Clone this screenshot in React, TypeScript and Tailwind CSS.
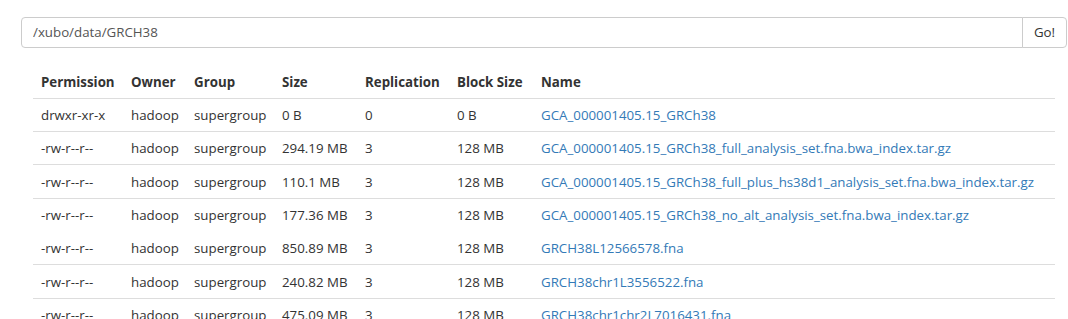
import React from "react"

interface FileRow {
  permission: string
  owner: string
  group: string
  size: string
  replication: string
  blockSize: string
  name: string
  noBorder?: boolean
}

const rows: FileRow[] = [
  { permission: "drwxr-xr-x", owner: "hadoop", group: "supergroup", size: "0 B", replication: "0", blockSize: "0 B", name: "GCA_000001405.15_GRCh38" },
  { permission: "-rw-r--r--", owner: "hadoop", group: "supergroup", size: "294.19 MB", replication: "3", blockSize: "128 MB", name: "GCA_000001405.15_GRCh38_full_analysis_set.fna.bwa_index.tar.gz" },
  { permission: "-rw-r--r--", owner: "hadoop", group: "supergroup", size: "110.1 MB", replication: "3", blockSize: "128 MB", name: "GCA_000001405.15_GRCh38_full_plus_hs38d1_analysis_set.fna.bwa_index.tar.gz" },
  { permission: "-rw-r--r--", owner: "hadoop", group: "supergroup", size: "177.36 MB", replication: "3", blockSize: "128 MB", name: "GCA_000001405.15_GRCh38_no_alt_analysis_set.fna.bwa_index.tar.gz" },
  { permission: "-rw-r--r--", owner: "hadoop", group: "supergroup", size: "850.89 MB", replication: "3", blockSize: "128 MB", name: "GRCH38L12566578.fna", noBorder: true },
  { permission: "-rw-r--r--", owner: "hadoop", group: "supergroup", size: "240.82 MB", replication: "3", blockSize: "128 MB", name: "GRCH38chr1L3556522.fna" },
  { permission: "-rw-r--r--", owner: "hadoop", group: "supergroup", size: "475.09 MB", replication: "3", blockSize: "128 MB", name: "GRCH38chr1chr2L7016431.fna" },
]

const headers = ["Permission", "Owner", "Group", "Size", "Replication", "Block Size", "Name"]
const widths = ["w-[90px]", "w-[63px]", "w-[88px]", "w-[83px]", "w-[92px]", "w-[84px]", ""]

export default function App() {
  return (
    <div className="min-h-screen bg-white font-['Open_Sans',sans-serif] text-[13.3px] text-[#333] overflow-hidden">
      <div className="pt-[17px] pl-[21px] pr-px">
        <div className="flex h-[31px]">
          <input
            defaultValue="/xubo/data/GRCH38"
            className="flex-1 min-w-0 rounded-l-[4px] border border-[#ccc] px-[11px] pt-px text-[13.3px] text-[#555] outline-none"
          />
          <button className="-ml-px w-[45px] rounded-r-[4px] border border-[#ccc] bg-white pt-px text-[13.3px] text-[#333]">
            Go!
          </button>
        </div>
      </div>

      <div className="pl-[33px] pr-[13px] pt-[17px]">
        <table className="w-full table-fixed border-collapse">
          <thead>
            <tr>
              {headers.map((h, i) => (
                <th key={h} className={`${widths[i]} h-[33px] px-2 pt-[4px] pb-0 text-left font-bold`}>
                  {h}
                </th>
              ))}
            </tr>
          </thead>
          <tbody>
            {rows.map((r, i) => (
              <tr key={r.name} className={r.noBorder ? "" : "border-t border-[#ddd]"}>
                <td className={`${i % 3 === 2 ? "h-[34px]" : "h-[33px]"} px-2 pt-[3px] pb-0 whitespace-nowrap`}>{r.permission}</td>
                <td className="px-2 pt-[3px] pb-0 whitespace-nowrap">{r.owner}</td>
                <td className="px-2 pt-[3px] pb-0 whitespace-nowrap">{r.group}</td>
                <td className="px-2 pt-[3px] pb-0 whitespace-nowrap">{r.size}</td>
                <td className="px-2 pt-[3px] pb-0 whitespace-nowrap">{r.replication}</td>
                <td className="px-2 pt-[3px] pb-0 whitespace-nowrap">{r.blockSize}</td>
                <td className="px-2 pt-[3px] pb-0 whitespace-nowrap">
                  <a href="#" className="text-[#337ab7]">{r.name}</a>
                </td>
              </tr>
            ))}
          </tbody>
        </table>
      </div>
    </div>
  )
}
